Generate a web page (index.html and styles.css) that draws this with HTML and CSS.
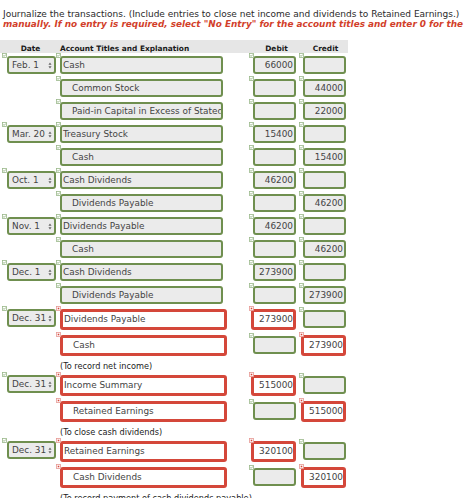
FILE: index.html
```html
<!DOCTYPE html>
<html>
<head>
<meta charset="utf-8">
<link rel="stylesheet" href="styles.css">
</head>
<body>
<div class="intro">
  <div class="l1">Journalize the transactions. (Include entries to close net income and dividends to Retained Earnings.)</div>
  <div class="l2">manually. If no entry is required, select "No Entry" for the account titles and enter 0 for the</div>
</div>
<div class="sheet">
  <div class="hdr">
    <div class="c-date">Date</div>
    <div class="c-acct">Account Titles and Explanation</div>
    <div class="c-num">Debit</div>
    <div class="c-num c-cr">Credit</div>
  </div>

  <div class="row">
    <div class="c-date"><div class="fld"><svg class="mk" viewBox="0 0 5 5"><rect x=".5" y=".5" width="4" height="4" class="mk-g"/><path d="M1.3 2.6 L2.2 3.4 L3.8 1.5" class="mk-ck"/></svg><div class="sel">Feb. 1<svg class="arr" viewBox="0 0 5 9"><path d="M2.5 0.5 L4.5 3.5 L0.5 3.5 Z M2.5 8.5 L4.5 5.5 L0.5 5.5 Z"/></svg></div></div></div>
    <div class="c-acct"><div class="fld"><svg class="mk" viewBox="0 0 5 5"><rect x=".5" y=".5" width="4" height="4" class="mk-g"/><path d="M1.3 2.6 L2.2 3.4 L3.8 1.5" class="mk-ck"/></svg><div class="inp acct">Cash</div></div></div>
    <div class="c-num"><div class="fld"><svg class="mk" viewBox="0 0 5 5"><rect x=".5" y=".5" width="4" height="4" class="mk-g"/><path d="M1.3 2.6 L2.2 3.4 L3.8 1.5" class="mk-ck"/></svg><div class="inp num">66000</div></div></div>
    <div class="c-num"><div class="fld"><svg class="mk" viewBox="0 0 5 5"><rect x=".5" y=".5" width="4" height="4" class="mk-g"/><path d="M1.3 2.6 L2.2 3.4 L3.8 1.5" class="mk-ck"/></svg><div class="inp num"></div></div></div>
  </div>

  <div class="row">
    <div class="c-date"></div>
    <div class="c-acct"><div class="fld"><svg class="mk" viewBox="0 0 5 5"><rect x=".5" y=".5" width="4" height="4" class="mk-g"/><path d="M1.3 2.6 L2.2 3.4 L3.8 1.5" class="mk-ck"/></svg><div class="inp acct ind">Common Stock</div></div></div>
    <div class="c-num"><div class="fld"><svg class="mk" viewBox="0 0 5 5"><rect x=".5" y=".5" width="4" height="4" class="mk-g"/><path d="M1.3 2.6 L2.2 3.4 L3.8 1.5" class="mk-ck"/></svg><div class="inp num"></div></div></div>
    <div class="c-num"><div class="fld"><svg class="mk" viewBox="0 0 5 5"><rect x=".5" y=".5" width="4" height="4" class="mk-g"/><path d="M1.3 2.6 L2.2 3.4 L3.8 1.5" class="mk-ck"/></svg><div class="inp num">44000</div></div></div>
  </div>

  <div class="row">
    <div class="c-date"></div>
    <div class="c-acct"><div class="fld"><svg class="mk" viewBox="0 0 5 5"><rect x=".5" y=".5" width="4" height="4" class="mk-g"/><path d="M1.3 2.6 L2.2 3.4 L3.8 1.5" class="mk-ck"/></svg><div class="inp acct ind">Paid-in Capital in Excess of Stated Value</div></div></div>
    <div class="c-num"><div class="fld"><svg class="mk" viewBox="0 0 5 5"><rect x=".5" y=".5" width="4" height="4" class="mk-g"/><path d="M1.3 2.6 L2.2 3.4 L3.8 1.5" class="mk-ck"/></svg><div class="inp num"></div></div></div>
    <div class="c-num"><div class="fld"><svg class="mk" viewBox="0 0 5 5"><rect x=".5" y=".5" width="4" height="4" class="mk-g"/><path d="M1.3 2.6 L2.2 3.4 L3.8 1.5" class="mk-ck"/></svg><div class="inp num">22000</div></div></div>
  </div>

  <div class="row">
    <div class="c-date"><div class="fld"><svg class="mk" viewBox="0 0 5 5"><rect x=".5" y=".5" width="4" height="4" class="mk-g"/><path d="M1.3 2.6 L2.2 3.4 L3.8 1.5" class="mk-ck"/></svg><div class="sel">Mar. 20<svg class="arr" viewBox="0 0 5 9"><path d="M2.5 0.5 L4.5 3.5 L0.5 3.5 Z M2.5 8.5 L4.5 5.5 L0.5 5.5 Z"/></svg></div></div></div>
    <div class="c-acct"><div class="fld"><svg class="mk" viewBox="0 0 5 5"><rect x=".5" y=".5" width="4" height="4" class="mk-g"/><path d="M1.3 2.6 L2.2 3.4 L3.8 1.5" class="mk-ck"/></svg><div class="inp acct">Treasury Stock</div></div></div>
    <div class="c-num"><div class="fld"><svg class="mk" viewBox="0 0 5 5"><rect x=".5" y=".5" width="4" height="4" class="mk-g"/><path d="M1.3 2.6 L2.2 3.4 L3.8 1.5" class="mk-ck"/></svg><div class="inp num">15400</div></div></div>
    <div class="c-num"><div class="fld"><svg class="mk" viewBox="0 0 5 5"><rect x=".5" y=".5" width="4" height="4" class="mk-g"/><path d="M1.3 2.6 L2.2 3.4 L3.8 1.5" class="mk-ck"/></svg><div class="inp num"></div></div></div>
  </div>

  <div class="row">
    <div class="c-date"></div>
    <div class="c-acct"><div class="fld"><svg class="mk" viewBox="0 0 5 5"><rect x=".5" y=".5" width="4" height="4" class="mk-g"/><path d="M1.3 2.6 L2.2 3.4 L3.8 1.5" class="mk-ck"/></svg><div class="inp acct ind">Cash</div></div></div>
    <div class="c-num"><div class="fld"><svg class="mk" viewBox="0 0 5 5"><rect x=".5" y=".5" width="4" height="4" class="mk-g"/><path d="M1.3 2.6 L2.2 3.4 L3.8 1.5" class="mk-ck"/></svg><div class="inp num"></div></div></div>
    <div class="c-num"><div class="fld"><svg class="mk" viewBox="0 0 5 5"><rect x=".5" y=".5" width="4" height="4" class="mk-g"/><path d="M1.3 2.6 L2.2 3.4 L3.8 1.5" class="mk-ck"/></svg><div class="inp num">15400</div></div></div>
  </div>

  <div class="row">
    <div class="c-date"><div class="fld"><svg class="mk" viewBox="0 0 5 5"><rect x=".5" y=".5" width="4" height="4" class="mk-g"/><path d="M1.3 2.6 L2.2 3.4 L3.8 1.5" class="mk-ck"/></svg><div class="sel">Oct. 1<svg class="arr" viewBox="0 0 5 9"><path d="M2.5 0.5 L4.5 3.5 L0.5 3.5 Z M2.5 8.5 L4.5 5.5 L0.5 5.5 Z"/></svg></div></div></div>
    <div class="c-acct"><div class="fld"><svg class="mk" viewBox="0 0 5 5"><rect x=".5" y=".5" width="4" height="4" class="mk-g"/><path d="M1.3 2.6 L2.2 3.4 L3.8 1.5" class="mk-ck"/></svg><div class="inp acct">Cash Dividends</div></div></div>
    <div class="c-num"><div class="fld"><svg class="mk" viewBox="0 0 5 5"><rect x=".5" y=".5" width="4" height="4" class="mk-g"/><path d="M1.3 2.6 L2.2 3.4 L3.8 1.5" class="mk-ck"/></svg><div class="inp num">46200</div></div></div>
    <div class="c-num"><div class="fld"><svg class="mk" viewBox="0 0 5 5"><rect x=".5" y=".5" width="4" height="4" class="mk-g"/><path d="M1.3 2.6 L2.2 3.4 L3.8 1.5" class="mk-ck"/></svg><div class="inp num"></div></div></div>
  </div>

  <div class="row">
    <div class="c-date"></div>
    <div class="c-acct"><div class="fld"><svg class="mk" viewBox="0 0 5 5"><rect x=".5" y=".5" width="4" height="4" class="mk-g"/><path d="M1.3 2.6 L2.2 3.4 L3.8 1.5" class="mk-ck"/></svg><div class="inp acct ind">Dividends Payable</div></div></div>
    <div class="c-num"><div class="fld"><svg class="mk" viewBox="0 0 5 5"><rect x=".5" y=".5" width="4" height="4" class="mk-g"/><path d="M1.3 2.6 L2.2 3.4 L3.8 1.5" class="mk-ck"/></svg><div class="inp num"></div></div></div>
    <div class="c-num"><div class="fld"><svg class="mk" viewBox="0 0 5 5"><rect x=".5" y=".5" width="4" height="4" class="mk-g"/><path d="M1.3 2.6 L2.2 3.4 L3.8 1.5" class="mk-ck"/></svg><div class="inp num">46200</div></div></div>
  </div>

  <div class="row">
    <div class="c-date"><div class="fld"><svg class="mk" viewBox="0 0 5 5"><rect x=".5" y=".5" width="4" height="4" class="mk-g"/><path d="M1.3 2.6 L2.2 3.4 L3.8 1.5" class="mk-ck"/></svg><div class="sel">Nov. 1<svg class="arr" viewBox="0 0 5 9"><path d="M2.5 0.5 L4.5 3.5 L0.5 3.5 Z M2.5 8.5 L4.5 5.5 L0.5 5.5 Z"/></svg></div></div></div>
    <div class="c-acct"><div class="fld"><svg class="mk" viewBox="0 0 5 5"><rect x=".5" y=".5" width="4" height="4" class="mk-g"/><path d="M1.3 2.6 L2.2 3.4 L3.8 1.5" class="mk-ck"/></svg><div class="inp acct">Dividends Payable</div></div></div>
    <div class="c-num"><div class="fld"><svg class="mk" viewBox="0 0 5 5"><rect x=".5" y=".5" width="4" height="4" class="mk-g"/><path d="M1.3 2.6 L2.2 3.4 L3.8 1.5" class="mk-ck"/></svg><div class="inp num">46200</div></div></div>
    <div class="c-num"><div class="fld"><svg class="mk" viewBox="0 0 5 5"><rect x=".5" y=".5" width="4" height="4" class="mk-g"/><path d="M1.3 2.6 L2.2 3.4 L3.8 1.5" class="mk-ck"/></svg><div class="inp num"></div></div></div>
  </div>

  <div class="row">
    <div class="c-date"></div>
    <div class="c-acct"><div class="fld"><svg class="mk" viewBox="0 0 5 5"><rect x=".5" y=".5" width="4" height="4" class="mk-g"/><path d="M1.3 2.6 L2.2 3.4 L3.8 1.5" class="mk-ck"/></svg><div class="inp acct ind">Cash</div></div></div>
    <div class="c-num"><div class="fld"><svg class="mk" viewBox="0 0 5 5"><rect x=".5" y=".5" width="4" height="4" class="mk-g"/><path d="M1.3 2.6 L2.2 3.4 L3.8 1.5" class="mk-ck"/></svg><div class="inp num"></div></div></div>
    <div class="c-num"><div class="fld"><svg class="mk" viewBox="0 0 5 5"><rect x=".5" y=".5" width="4" height="4" class="mk-g"/><path d="M1.3 2.6 L2.2 3.4 L3.8 1.5" class="mk-ck"/></svg><div class="inp num">46200</div></div></div>
  </div>

  <div class="row">
    <div class="c-date"><div class="fld"><svg class="mk" viewBox="0 0 5 5"><rect x=".5" y=".5" width="4" height="4" class="mk-g"/><path d="M1.3 2.6 L2.2 3.4 L3.8 1.5" class="mk-ck"/></svg><div class="sel">Dec. 1<svg class="arr" viewBox="0 0 5 9"><path d="M2.5 0.5 L4.5 3.5 L0.5 3.5 Z M2.5 8.5 L4.5 5.5 L0.5 5.5 Z"/></svg></div></div></div>
    <div class="c-acct"><div class="fld"><svg class="mk" viewBox="0 0 5 5"><rect x=".5" y=".5" width="4" height="4" class="mk-g"/><path d="M1.3 2.6 L2.2 3.4 L3.8 1.5" class="mk-ck"/></svg><div class="inp acct">Cash Dividends</div></div></div>
    <div class="c-num"><div class="fld"><svg class="mk" viewBox="0 0 5 5"><rect x=".5" y=".5" width="4" height="4" class="mk-g"/><path d="M1.3 2.6 L2.2 3.4 L3.8 1.5" class="mk-ck"/></svg><div class="inp num">273900</div></div></div>
    <div class="c-num"><div class="fld"><svg class="mk" viewBox="0 0 5 5"><rect x=".5" y=".5" width="4" height="4" class="mk-g"/><path d="M1.3 2.6 L2.2 3.4 L3.8 1.5" class="mk-ck"/></svg><div class="inp num"></div></div></div>
  </div>

  <div class="row">
    <div class="c-date"></div>
    <div class="c-acct"><div class="fld"><svg class="mk" viewBox="0 0 5 5"><rect x=".5" y=".5" width="4" height="4" class="mk-g"/><path d="M1.3 2.6 L2.2 3.4 L3.8 1.5" class="mk-ck"/></svg><div class="inp acct ind">Dividends Payable</div></div></div>
    <div class="c-num"><div class="fld"><svg class="mk" viewBox="0 0 5 5"><rect x=".5" y=".5" width="4" height="4" class="mk-g"/><path d="M1.3 2.6 L2.2 3.4 L3.8 1.5" class="mk-ck"/></svg><div class="inp num"></div></div></div>
    <div class="c-num"><div class="fld"><svg class="mk" viewBox="0 0 5 5"><rect x=".5" y=".5" width="4" height="4" class="mk-g"/><path d="M1.3 2.6 L2.2 3.4 L3.8 1.5" class="mk-ck"/></svg><div class="inp num">273900</div></div></div>
  </div>

  <!-- closing entries -->
  <div class="row rrow">
    <div class="c-date"><div class="fld"><svg class="mk" viewBox="0 0 5 5"><rect x=".5" y=".5" width="4" height="4" class="mk-g"/><path d="M1.3 2.6 L2.2 3.4 L3.8 1.5" class="mk-ck"/></svg><div class="sel">Dec. 31<svg class="arr" viewBox="0 0 5 9"><path d="M2.5 0.5 L4.5 3.5 L0.5 3.5 Z M2.5 8.5 L4.5 5.5 L0.5 5.5 Z"/></svg></div></div></div>
    <div class="c-acct"><div class="fld"><svg class="mk mk-red" viewBox="0 0 5 5"><rect x=".5" y=".5" width="4" height="4" class="mk-r"/><rect x="1.7" y="1.7" width="1.6" height="1.6" class="mk-dot"/></svg><div class="inp acct bad">Dividends Payable</div></div></div>
    <div class="c-num"><div class="fld"><svg class="mk mk-red" viewBox="0 0 5 5"><rect x=".5" y=".5" width="4" height="4" class="mk-r"/><rect x="1.7" y="1.7" width="1.6" height="1.6" class="mk-dot"/></svg><div class="inp num bad">273900</div></div></div>
    <div class="c-num"><div class="fld"><svg class="mk" viewBox="0 0 5 5"><rect x=".5" y=".5" width="4" height="4" class="mk-g"/><path d="M1.3 2.6 L2.2 3.4 L3.8 1.5" class="mk-ck"/></svg><div class="inp num"></div></div></div>
  </div>

  <div class="row rrow">
    <div class="c-date"></div>
    <div class="c-acct"><div class="fld"><svg class="mk mk-red" viewBox="0 0 5 5"><rect x=".5" y=".5" width="4" height="4" class="mk-r"/><rect x="1.7" y="1.7" width="1.6" height="1.6" class="mk-dot"/></svg><div class="inp acct bad ind">Cash</div></div></div>
    <div class="c-num"><div class="fld"><svg class="mk" viewBox="0 0 5 5"><rect x=".5" y=".5" width="4" height="4" class="mk-g"/><path d="M1.3 2.6 L2.2 3.4 L3.8 1.5" class="mk-ck"/></svg><div class="inp num"></div></div></div>
    <div class="c-num"><div class="fld"><svg class="mk mk-red" viewBox="0 0 5 5"><rect x=".5" y=".5" width="4" height="4" class="mk-r"/><rect x="1.7" y="1.7" width="1.6" height="1.6" class="mk-dot"/></svg><div class="inp num bad">273900</div></div></div>
  </div>
  <div class="note">(To record net income)</div>

  <div class="row rrow">
    <div class="c-date"><div class="fld"><svg class="mk" viewBox="0 0 5 5"><rect x=".5" y=".5" width="4" height="4" class="mk-g"/><path d="M1.3 2.6 L2.2 3.4 L3.8 1.5" class="mk-ck"/></svg><div class="sel">Dec. 31<svg class="arr" viewBox="0 0 5 9"><path d="M2.5 0.5 L4.5 3.5 L0.5 3.5 Z M2.5 8.5 L4.5 5.5 L0.5 5.5 Z"/></svg></div></div></div>
    <div class="c-acct"><div class="fld"><svg class="mk mk-red" viewBox="0 0 5 5"><rect x=".5" y=".5" width="4" height="4" class="mk-r"/><rect x="1.7" y="1.7" width="1.6" height="1.6" class="mk-dot"/></svg><div class="inp acct bad">Income Summary</div></div></div>
    <div class="c-num"><div class="fld"><svg class="mk mk-red" viewBox="0 0 5 5"><rect x=".5" y=".5" width="4" height="4" class="mk-r"/><rect x="1.7" y="1.7" width="1.6" height="1.6" class="mk-dot"/></svg><div class="inp num bad">515000</div></div></div>
    <div class="c-num"><div class="fld"><svg class="mk" viewBox="0 0 5 5"><rect x=".5" y=".5" width="4" height="4" class="mk-g"/><path d="M1.3 2.6 L2.2 3.4 L3.8 1.5" class="mk-ck"/></svg><div class="inp num"></div></div></div>
  </div>

  <div class="row rrow">
    <div class="c-date"></div>
    <div class="c-acct"><div class="fld"><svg class="mk mk-red" viewBox="0 0 5 5"><rect x=".5" y=".5" width="4" height="4" class="mk-r"/><rect x="1.7" y="1.7" width="1.6" height="1.6" class="mk-dot"/></svg><div class="inp acct bad ind">Retained Earnings</div></div></div>
    <div class="c-num"><div class="fld"><svg class="mk" viewBox="0 0 5 5"><rect x=".5" y=".5" width="4" height="4" class="mk-g"/><path d="M1.3 2.6 L2.2 3.4 L3.8 1.5" class="mk-ck"/></svg><div class="inp num"></div></div></div>
    <div class="c-num"><div class="fld"><svg class="mk mk-red" viewBox="0 0 5 5"><rect x=".5" y=".5" width="4" height="4" class="mk-r"/><rect x="1.7" y="1.7" width="1.6" height="1.6" class="mk-dot"/></svg><div class="inp num bad">515000</div></div></div>
  </div>
  <div class="note">(To close cash dividends)</div>

  <div class="row rrow">
    <div class="c-date"><div class="fld"><svg class="mk" viewBox="0 0 5 5"><rect x=".5" y=".5" width="4" height="4" class="mk-g"/><path d="M1.3 2.6 L2.2 3.4 L3.8 1.5" class="mk-ck"/></svg><div class="sel">Dec. 31<svg class="arr" viewBox="0 0 5 9"><path d="M2.5 0.5 L4.5 3.5 L0.5 3.5 Z M2.5 8.5 L4.5 5.5 L0.5 5.5 Z"/></svg></div></div></div>
    <div class="c-acct"><div class="fld"><svg class="mk mk-red" viewBox="0 0 5 5"><rect x=".5" y=".5" width="4" height="4" class="mk-r"/><rect x="1.7" y="1.7" width="1.6" height="1.6" class="mk-dot"/></svg><div class="inp acct bad">Retained Earnings</div></div></div>
    <div class="c-num"><div class="fld"><svg class="mk mk-red" viewBox="0 0 5 5"><rect x=".5" y=".5" width="4" height="4" class="mk-r"/><rect x="1.7" y="1.7" width="1.6" height="1.6" class="mk-dot"/></svg><div class="inp num bad">320100</div></div></div>
    <div class="c-num"><div class="fld"><svg class="mk" viewBox="0 0 5 5"><rect x=".5" y=".5" width="4" height="4" class="mk-g"/><path d="M1.3 2.6 L2.2 3.4 L3.8 1.5" class="mk-ck"/></svg><div class="inp num"></div></div></div>
  </div>

  <div class="row rrow">
    <div class="c-date"></div>
    <div class="c-acct"><div class="fld"><svg class="mk mk-red" viewBox="0 0 5 5"><rect x=".5" y=".5" width="4" height="4" class="mk-r"/><rect x="1.7" y="1.7" width="1.6" height="1.6" class="mk-dot"/></svg><div class="inp acct bad ind">Cash Dividends</div></div></div>
    <div class="c-num"><div class="fld"><svg class="mk" viewBox="0 0 5 5"><rect x=".5" y=".5" width="4" height="4" class="mk-g"/><path d="M1.3 2.6 L2.2 3.4 L3.8 1.5" class="mk-ck"/></svg><div class="inp num"></div></div></div>
    <div class="c-num"><div class="fld"><svg class="mk mk-red" viewBox="0 0 5 5"><rect x=".5" y=".5" width="4" height="4" class="mk-r"/><rect x="1.7" y="1.7" width="1.6" height="1.6" class="mk-dot"/></svg><div class="inp num bad">320100</div></div></div>
  </div>
  <div class="note">(To record payment of cash dividends payable)</div>
</div>
</body>
</html>
```

FILE: styles.css
```css
html, body {
  margin: 0;
  padding: 0;
  background: #fff;
  overflow: hidden;
}
body {
  font-family: "DejaVu Sans", Verdana, sans-serif;
  color: #222;
  width: 468px;
}
.intro {
  padding: 10px 0 0 3px;
  font-size: 9px;
  line-height: 9.5px;
  white-space: nowrap;
  overflow: hidden;
}
.l1 { color: #2a2a2a; }
.l2 {
  color: #d23f2b;
  font-weight: bold;
  font-style: italic;
  font-size: 8.9px;
}
.sheet {
  margin-top: 11px;
  width: 350px;
}
.hdr {
  display: flex;
  width: 348px;
  height: 9px;
  padding-top: 4px;
  background: #e6e6e6;
  font-size: 7.4px;
  line-height: 9px;
  font-weight: bold;
  color: #1a1a1a;
}
.hdr .c-date { text-align: center; padding-left: 3px; box-sizing: border-box; }
.hdr .c-acct { padding-left: 2px; box-sizing: border-box; }
.hdr .c-num { text-align: center; padding-left: 3px; box-sizing: border-box; }
.hdr .c-cr { width: 48px; }

.c-date { width: 58px; flex: none; }
.c-acct { width: 192px; flex: none; }
.c-num { width: 50px; flex: none; }

.row {
  display: flex;
  height: 23px;
  align-items: flex-start;
}
.hdr + .row { padding-top: 3px; height: 23px; }
.rrow { height: 26px; }

.fld {
  position: relative;
}
.c-date .fld { margin-left: 7px; }
.c-acct .fld { margin-left: 2px; }
.c-num .fld { margin-left: 3px; }

.mk {
  position: absolute;
  left: -5px;
  top: -3px;
  width: 5px;
  height: 5px;
}
.c-acct .mk, .c-num .mk { left: -4px; }
.mk-g { fill: #fff; stroke: #9bb98a; stroke-width: 0.8; }
.mk-ck { fill: none; stroke: #6d9a55; stroke-width: 0.7; }
.mk-r { fill: #fff; stroke: #e79a94; stroke-width: 0.8; }
.mk-dot { fill: #d8463a; }

.sel, .inp {
  box-sizing: border-box;
  height: 18px;
  border: 2px solid #6f8f4f;
  border-radius: 3px;
  background: #ebebeb;
  color: #444;
  font-size: 8.9px;
  line-height: 14px;
  white-space: nowrap;
  overflow: hidden;
}
.sel {
  width: 49px;
  display: flex;
  align-items: center;
  padding: 0 2px 0 3px;
}
.arr {
  width: 4px;
  height: 7px;
  fill: #666;
  flex: none;
  margin-left: auto;
}
.inp.acct {
  width: 163px;
  padding-left: 1px;
}
.inp.acct.ind { padding-left: 10px; }
.inp.num {
  width: 43px;
  text-align: right;
  padding-right: 1px;
}

.rrow .inp:not(.bad) { margin-top: 1px; }

.inp.bad {
  height: 21px;
  border: 3px solid #d4473a;
  background: #fff;
  line-height: 15px;
}
.inp.acct.bad { width: 167px; padding-left: 1px; }
.inp.acct.bad.ind { padding-left: 10px; }
.c-num .fld .inp.num.bad { width: 45px; margin-left: -2px; padding-right: 0; }

.note {
  height: 14px;
  padding-left: 60px;
  font-family: "DejaVu Sans Condensed", "DejaVu Sans", sans-serif;
  font-size: 9.1px;
  line-height: 11px;
  color: #222;
  white-space: nowrap;
}
```
